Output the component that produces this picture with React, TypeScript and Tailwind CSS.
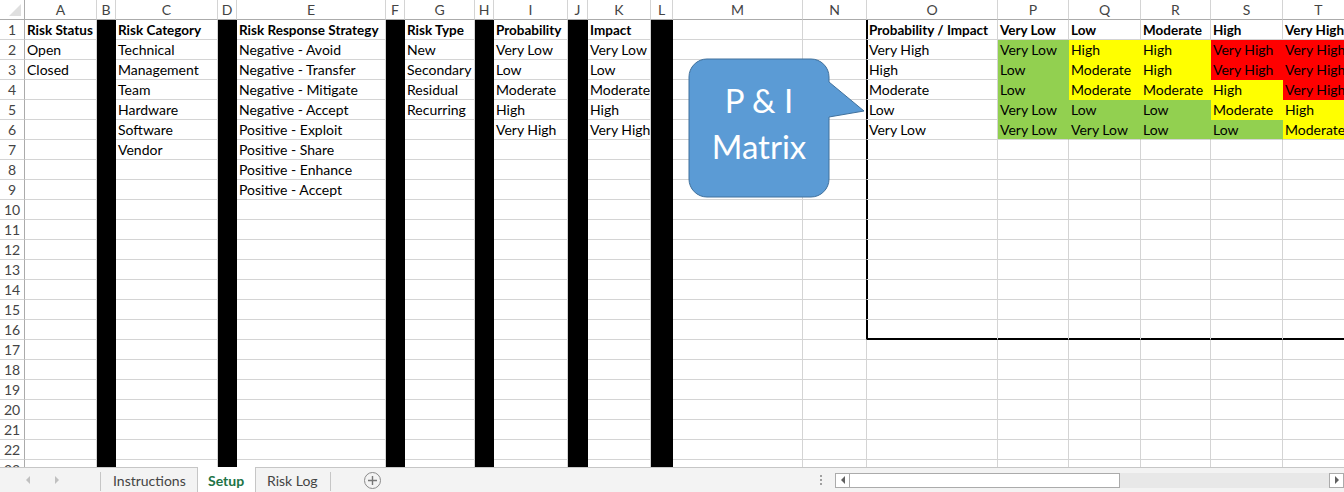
import React from "react";

const letters = ["A", "B", "C", "D", "E", "F", "G", "H", "I", "J", "K", "L", "M", "N", "O", "P", "Q", "R", "S", "T"];
const blackCols = [1, 3, 5, 7, 9, 11];

const lists: Record<number, string[]> = {
  0: ["Risk Status", "Open", "Closed"],
  2: ["Risk Category", "Technical", "Management", "Team", "Hardware", "Software", "Vendor"],
  4: [
    "Risk Response Strategy",
    "Negative - Avoid",
    "Negative - Transfer",
    "Negative - Mitigate",
    "Negative - Accept",
    "Positive - Exploit",
    "Positive - Share",
    "Positive - Enhance",
    "Positive - Accept",
  ],
  6: ["Risk Type", "New", "Secondary", "Residual", "Recurring"],
  8: ["Probability", "Very Low", "Low", "Moderate", "High", "Very High"],
  10: ["Impact", "Very Low", "Low", "Moderate", "High", "Very High"],
  14: ["Probability / Impact", "Very High", "High", "Moderate", "Low", "Very Low"],
  15: ["Very Low"],
  16: ["Low"],
  17: ["Moderate"],
  18: ["High"],
  19: ["Very High"],
};

// probability x impact results, rows 2-6, columns P-T
const matrix: [string, "g" | "y" | "r"][][] = [
  [["Very Low", "g"], ["High", "y"], ["High", "y"], ["Very High", "r"], ["Very High", "r"]],
  [["Low", "g"], ["Moderate", "y"], ["High", "y"], ["Very High", "r"], ["Very High", "r"]],
  [["Low", "g"], ["Moderate", "y"], ["Moderate", "y"], ["High", "y"], ["Very High", "r"]],
  [["Very Low", "g"], ["Low", "g"], ["Low", "g"], ["Moderate", "y"], ["High", "y"]],
  [["Very Low", "g"], ["Very Low", "g"], ["Low", "g"], ["Low", "g"], ["Moderate", "y"]],
];

const fills = {
  g: "bg-[#92d050] border-[#92d050]",
  y: "bg-[#ffff00] border-[#ffff00]",
  r: "bg-[#ff0000] border-[#ff0000]",
};

const cellBase =
  "h-5 border-r border-b px-[2px] pt-[1px] overflow-hidden whitespace-nowrap leading-[18px] text-black";

function Cell({ row, col }: { row: number; col: number }) {
  let text = "";
  let cls = "border-[#d4d4d4]";

  if (blackCols.includes(col)) {
    cls = "bg-black border-black";
  } else if (col >= 15 && row >= 2 && row <= 6) {
    const [t, f] = matrix[row - 2][col - 15];
    text = t;
    cls = fills[f] + (row === 6 ? " border-b-[#d4d4d4]" : "");
  } else {
    text = lists[col]?.[row - 1] ?? "";
  }

  // thick outline round the P & I matrix
  let box = "";
  if (row <= 16 && col === 13) box = " border-r-black";
  if (row <= 15 && col === 14) box = " shadow-[inset_1px_0_0_#000]";
  if (row === 16 && col === 14) box = " border-b-black shadow-[inset_1px_0_0_#000,inset_0_-1px_0_#000]";
  if (row === 16 && col > 14) box = " border-b-black shadow-[inset_0_-1px_0_#000]";

  const type = row === 1 ? " font-bold text-[13.5px]" : " text-[14px]";
  return <div className={`${cellBase} ${cls}${box}${type}`}>{text}</div>;
}

function Callout() {
  return (
    <div className="absolute left-[680px] top-[50px] w-[190px] h-[155px]">
      <svg width="190" height="155" viewBox="0 0 190 155" className="absolute inset-0">
        <path
          d="M27 9 H131 A18 18 0 0 1 149 27 V32 L184 61 L149 67 V129 A18 18 0 0 1 131 147 H27 A18 18 0 0 1 9 129 V27 A18 18 0 0 1 27 9 Z"
          fill="#5b9bd5"
          stroke="#41719c"
          strokeWidth="1"
        />
      </svg>
      <div className="absolute left-[9px] top-[27px] w-[140px] text-center text-white text-[33px] leading-[46px]">
        <div>P &amp; I</div>
        <div>Matrix</div>
      </div>
    </div>
  );
}

function TabBar() {
  return (
    <div className="h-[25px] bg-[#f3f3f3] flex items-stretch text-[14px] text-[#444]">
      <div className="w-[100px] border-t border-[#c6c6c6] flex items-center">
        <span className="ml-[26px] w-0 h-0 border-y-[4px] border-y-transparent border-r-[4px] border-r-[#c0c0c0]" />
        <span className="ml-[25px] w-0 h-0 border-y-[4px] border-y-transparent border-l-[4px] border-l-[#c0c0c0]" />
      </div>
      <div className="w-[97px] border-t border-[#c6c6c6] flex items-center">
        <div className="h-[19px] border-l border-[#c6c6c6] mt-[2px]" />
        <span className="ml-[12px]">Instructions</span>
      </div>
      <div className="w-[59px] bg-white border-x border-[#c6c6c6] flex flex-col">
        <div className="flex-1 flex items-center pt-[3px] pl-[10px] font-bold text-[#217346]">Setup</div>
        <div className="h-[3px] bg-[#217346] mb-[1px] -mx-px" />
      </div>
      <div className="w-[74px] border-t border-[#c6c6c6] flex items-center">
        <span className="ml-[11px]">Risk Log</span>
      </div>
      <div className="w-[505px] border-t border-[#c6c6c6] flex items-center">
        <div className="h-[19px] border-l border-[#c6c6c6] mt-[2px]" />
        <div className="ml-[33px] w-[17px] h-[17px] rounded-full border border-[#8a8a8a] flex items-center justify-center">
          <svg width="9" height="9" viewBox="0 0 9 9">
            <path d="M4.5 0 V9 M0 4.5 H9" stroke="#777" strokeWidth="1.4" />
          </svg>
        </div>
        <div className="ml-auto mr-[13px] flex flex-col gap-[2px]">
          <span className="w-[2px] h-[2px] bg-[#a0a0a0]" />
          <span className="w-[2px] h-[2px] bg-[#a0a0a0]" />
          <span className="w-[2px] h-[2px] bg-[#a0a0a0]" />
        </div>
      </div>
      <div className="flex-1 border-t border-[#c6c6c6] flex items-center">
        <div className="flex-1 h-[15px] flex bg-[#e8e8e8]">
          <div className="w-[15px] border border-[#ababab] bg-white flex items-center justify-center">
            <span className="w-0 h-0 border-y-[4px] border-y-transparent border-r-[4px] border-r-[#606060]" />
          </div>
          <div className="w-[270px] border border-l-0 border-[#ababab] bg-white" />
          <div className="flex-1" />
          <div className="w-[15px] border border-[#ababab] bg-white flex items-center justify-center">
            <span className="w-0 h-0 border-y-[4px] border-y-transparent border-l-[4px] border-l-[#606060]" />
          </div>
        </div>
      </div>
    </div>
  );
}

export default function App() {
  const rows = Array.from({ length: 23 }, (_, i) => i + 1);
  return (
    <div className="w-[1344px] h-[492px] overflow-hidden bg-white font-['Lato',sans-serif]">
      <div className="relative h-[467px] overflow-hidden">
        <div className="grid grid-cols-[25px_72px_19px_102px_19px_149px_19px_70px_19px_74px_20px_63px_22px_130px_64px_131px_71px_72px_70px_72px_72px] w-[1427px]">
          {/* corner */}
          <div className="h-5 border-r border-b border-[#ababab] bg-white flex items-end justify-end p-[3px]">
            <span className="w-0 h-0 border-l-[12px] border-l-transparent border-b-[12px] border-b-[#dfdfdf]" />
          </div>
          {letters.map((l) => (
            <div
              key={l}
              className="h-5 border-r border-b border-[#d4d4d4] border-b-[#ababab] text-center text-[14px] leading-[19px] text-[#444]"
            >
              {l}
            </div>
          ))}
          {rows.map((r) => (
            <React.Fragment key={r}>
              <div className="h-5 border-r border-b border-[#d4d4d4] border-r-[#ababab] text-center text-[14px] leading-[19px] text-[#444]">
                {r}
              </div>
              {letters.map((_, c) => (
                <Cell key={c} row={r} col={c} />
              ))}
            </React.Fragment>
          ))}
        </div>
        <Callout />
      </div>
      <TabBar />
    </div>
  );
}
